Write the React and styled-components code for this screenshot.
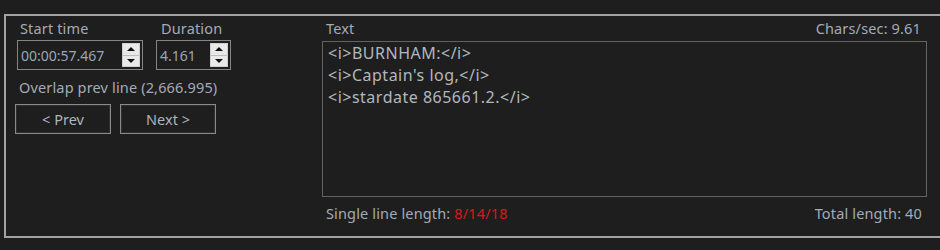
import React from 'react';
import styled, { createGlobalStyle } from 'styled-components';

const GlobalStyle = createGlobalStyle`
  html, body {
    margin: 0;
    padding: 0;
    background: #1e1e1e;
    overflow: hidden;
  }
  body {
    font-family: "Noto Sans", "Open Sans", sans-serif;
  }
`;

const Page = styled.div`
  width: 940px;
  height: 250px;
  padding: 14px 0 0 4px;
  box-sizing: border-box;
  overflow: hidden;
`;

const GroupBox = styled.div`
  width: 960px;
  height: 224px;
  box-sizing: border-box;
  border: 2px solid #a2a2a2;
  border-right: none;
  padding: 2px 0 0 11px;
  display: grid;
  grid-template-columns: 305px 605px;
`;

const LeftColumn = styled.div`
  display: flex;
  flex-direction: column;
`;

const FieldRow = styled.div`
  display: flex;
  gap: 13px;
`;

const Field = styled.div`
  display: flex;
  flex-direction: column;
  gap: 2px;
`;

const Label = styled.span`
  font-size: 14.5px;
  line-height: 20px;
  letter-spacing: 0.15px;
  color: #a3abb7;
  padding-left: ${(p) => p.$indent || 0}px;
`;

const NumberBox = styled.div`
  width: ${(p) => p.$width}px;
  height: 30px;
  box-sizing: border-box;
  border: 1px solid #858585;
  display: flex;
  align-items: center;
  justify-content: space-between;
  padding: 2px;
`;

const NumberValue = styled.span`
  font-size: 14px;
  color: #9ba6b3;
  padding-left: 1px;
`;

const Spinner = styled.div`
  width: 18px;
  height: 100%;
  display: flex;
  flex-direction: column;
  gap: 1px;
  background: #bdbdbd;
  border: 1px solid #cfcfcf;
  box-sizing: border-box;
`;

const SpinButton = styled.div`
  flex: 1;
  background: #e9e9e9;
  display: flex;
  align-items: center;
  justify-content: center;
`;

const Arrow = styled.span`
  width: 0;
  height: 0;
  border-left: 4px solid transparent;
  border-right: 4px solid transparent;
  ${(p) =>
    p.$down
      ? 'border-top: 4px solid #111;'
      : 'border-bottom: 4px solid #111;'}
`;

const InfoText = styled.div`
  font-size: 14.5px;
  line-height: 20px;
  letter-spacing: 0.15px;
  color: #a3abb7;
  margin-top: 7px;
  padding-left: 2px;
`;

const ButtonRow = styled.div`
  display: flex;
  gap: 9px;
  margin-top: 7px;
  margin-left: -2px;
`;

const NavButton = styled.button`
  width: 96px;
  height: 30px;
  background: #1e1e1e;
  border: 1px solid #8a8a8a;
  box-shadow: inset 0 0 0 1px #2e2e2e;
  color: #aeb4bd;
  font-family: inherit;
  font-size: 14.5px;
  padding: 0;
  cursor: pointer;
`;

const RightColumn = styled.div`
  display: flex;
  flex-direction: column;
`;

const HeaderRow = styled.div`
  display: flex;
  justify-content: space-between;
  padding: 0 6px 0 4px;
  height: 23px;
`;

const TextArea = styled.div`
  height: 156px;
  box-sizing: border-box;
  border: 1px solid #626262;
  padding: 0 5px;
  font-size: 16px;
  line-height: 22px;
  letter-spacing: 0.5px;
  color: #b1b7bf;
  white-space: pre;
`;

const FooterRow = styled.div`
  display: flex;
  justify-content: space-between;
  padding: 5px 5px 0 4px;
  font-size: 14.5px;
  line-height: 22px;
  letter-spacing: 0.15px;
  color: #a3abb7;
`;

const Warn = styled.span`
  color: #d51a1a;
`;

function NumberInput({ value, width }) {
  return (
    <NumberBox $width={width}>
      <NumberValue>{value}</NumberValue>
      <Spinner>
        <SpinButton>
          <Arrow />
        </SpinButton>
        <SpinButton>
          <Arrow $down />
        </SpinButton>
      </Spinner>
    </NumberBox>
  );
}

const lines = ['<i>BURNHAM:</i>', "<i>Captain's log,</i>", '<i>stardate 865661.2.</i>'];

export default function App() {
  return (
    <>
      <GlobalStyle />
      <Page>
        <GroupBox>
          <LeftColumn>
            <FieldRow>
              <Field>
                <Label $indent={3}>Start time</Label>
                <NumberInput value="00:00:57.467" width={126} />
              </Field>
              <Field>
                <Label $indent={5}>Duration</Label>
                <NumberInput value="4.161" width={75} />
              </Field>
            </FieldRow>
            <InfoText>Overlap prev line (2,666.995)</InfoText>
            <ButtonRow>
              <NavButton>&lt; Prev</NavButton>
              <NavButton>Next &gt;</NavButton>
            </ButtonRow>
          </LeftColumn>
          <RightColumn>
            <HeaderRow>
              <Label>Text</Label>
              <Label>Chars/sec: 9.61</Label>
            </HeaderRow>
            <TextArea>{lines.join('\n')}</TextArea>
            <FooterRow>
              <span>
                Single line length: <Warn>8/14/18</Warn>
              </span>
              <span>Total length: 40</span>
            </FooterRow>
          </RightColumn>
        </GroupBox>
      </Page>
    </>
  );
}
